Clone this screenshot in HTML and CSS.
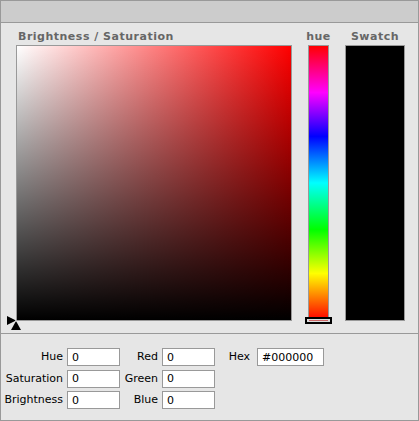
FILE: index.html
```html
<!DOCTYPE html>
<html>
<head>
<meta charset="utf-8">
<link rel="stylesheet" href="styles.css">
</head>
<body>
<div class="window">
  <div class="titlebar"></div>
  <div class="picker">
    <div class="col col-sat">
      <div class="heading">Brightness / Saturation</div>
      <div class="satbox">
        <div class="satcursor">
          <svg width="20" height="20" viewBox="0 0 20 20"><path d="M1 5 L10 9.5 L1 14 Z" fill="#000"/><path d="M5 19 L10 10 L15 19 Z" fill="#000"/><rect x="9" y="9" width="2" height="2" fill="#bbb"/></svg>
        </div>
      </div>
    </div>
    <div class="col col-hue">
      <div class="heading">hue</div>
      <div class="huebar">
        <div class="huemarker"></div>
      </div>
    </div>
    <div class="col col-swatch">
      <div class="heading">Swatch</div>
      <div class="swatch"></div>
    </div>
  </div>
  <div class="fields">
    <label class="lbl">Hue</label><input class="inp" value="0">
    <label class="lbl">Red</label><input class="inp" value="0">
    <label class="lbl lbl-hex">Hex</label><input class="inp inp-hex" value="#000000">
    <label class="lbl">Saturation</label><input class="inp" value="0">
    <label class="lbl">Green</label><input class="inp" value="0">
    <span></span><span></span>
    <label class="lbl">Brightness</label><input class="inp" value="0">
    <label class="lbl">Blue</label><input class="inp" value="0">
    <span></span><span></span>
  </div>
</div>
</body>
</html>
```
FILE: styles.css
```css
html, body { margin: 0; padding: 0; background: #e6e6e6; }
.window {
  width: 419px; height: 421px; box-sizing: border-box;
  border: 1px solid #999; background: #e6e6e6;
  font-family: "DejaVu Sans", Verdana, sans-serif;
}
.titlebar { height: 21px; background: #cccccc; border-bottom: 1px solid #999; }
.picker {
  display: flex; padding: 8px 0 0 15px; height: 311px; box-sizing: border-box;
  border-bottom: 1px solid #999;
}
.col { display: flex; flex-direction: column; align-items: center; }
.col-sat { align-items: flex-start; width: 276px; }
.col-hue { margin-left: 16px; width: 21px; }
.col-swatch { margin-left: 16px; width: 60px; }
.heading {
  font-weight: bold; font-size: 11px; letter-spacing: 0.5px; color: #666; height: 14px; line-height: 12px;
  white-space: nowrap; padding-left: 2px;
}
.col-hue .heading, .col-swatch .heading { padding-left: 0; }
.satbox {
  position: relative; width: 276px; height: 276px; box-sizing: border-box;
  border: 1px solid #999;
  background: linear-gradient(to bottom, rgba(0,0,0,0), #000), linear-gradient(to right, #fff, #f00);
}
.satcursor { position: absolute; left: -11px; bottom: -11px; width: 20px; height: 20px; }
.satcursor svg { display: block; }
.huebar {
  position: relative; width: 21px; height: 276px; box-sizing: border-box; border: 1px solid #999;
  background: linear-gradient(to bottom, #f00, #f0f 17%, #00f 33%, #0ff 50%, #0f0 67%, #ff0 83%, #f00);
}
.huemarker {
  position: absolute; left: -4px; bottom: -4px; width: 27px; height: 7px; box-sizing: border-box;
  border: 2px solid #000; background: #ddd;
}
.huemarker::after { content: ""; position: absolute; left: 2px; right: 2px; top: 1px; height: 1px; background: #c66; }
.swatch { width: 60px; height: 276px; box-sizing: border-box; border: 1px solid #999; background: #000; }
.fields {
  display: grid; grid-template-columns: 62px 53px 34px 53px 34px 67px;
  column-gap: 4px; row-gap: 3.5px; padding: 14px 0 0 0;
}
.lbl { font-size: 11px; color: #000; text-align: right; line-height: 18px; white-space: nowrap; }
.lbl-hex { padding-right: 3px; }
.inp {
  width: 53px; height: 18px; box-sizing: border-box; border: 1px solid #999; background: #fff;
  font-family: "DejaVu Sans", Verdana, sans-serif; font-size: 11px; padding: 0 0 0 4px; margin: 0;
  outline: none; color: #000;
}
.inp-hex { width: 67px; }
```
